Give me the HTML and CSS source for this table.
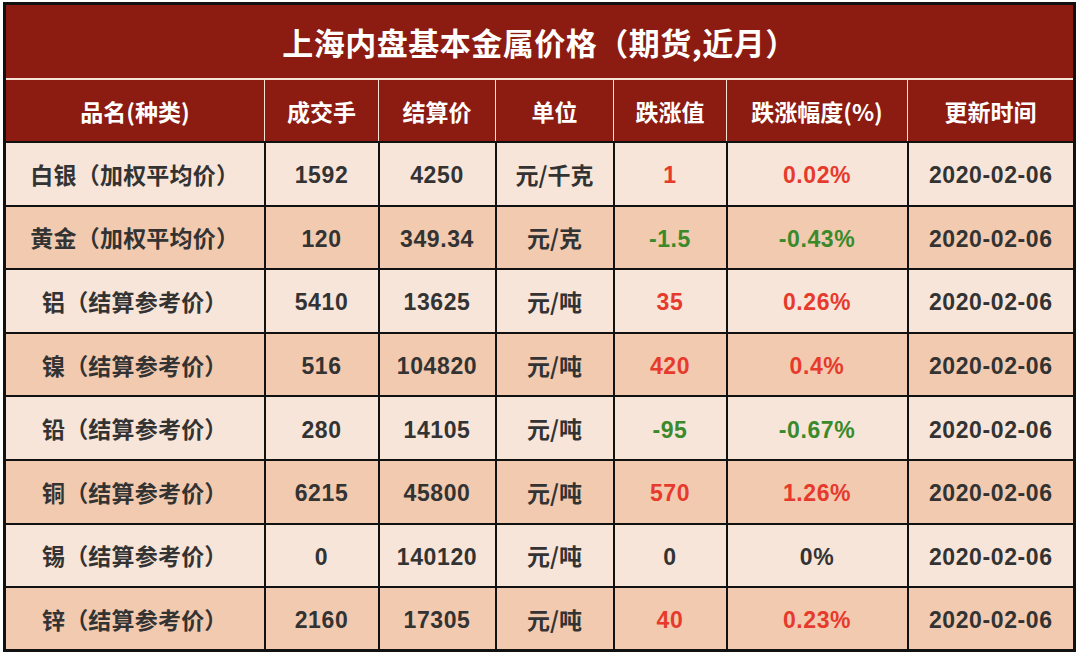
FILE: index.html
```html
<!DOCTYPE html>
<html lang="zh">
<head>
<meta charset="utf-8">
<link rel="stylesheet" href="styles.css">
</head>
<body>
<div class="wrap">
<table class="price">
  <colgroup>
    <col class="c1"><col class="c2"><col class="c3"><col class="c4"><col class="c5"><col class="c6"><col class="c7">
  </colgroup>
  <thead>
    <tr class="title-row"><th colspan="7">上海内盘基本金属价格（期货,近月）</th></tr>
    <tr class="head-row">
      <th>品名(种类)</th><th>成交手</th><th>结算价</th><th>单位</th><th>跌涨值</th><th>跌涨幅度(%)</th><th>更新时间</th>
    </tr>
  </thead>
  <tbody>
    <tr class="light"><td class="name">白银（加权平均价）</td><td class="num">1592</td><td class="num">4250</td><td class="unit">元/千克</td><td class="num up">1</td><td class="num up">0.02%</td><td class="num">2020-02-06</td></tr>
    <tr class="dark"><td class="name">黄金（加权平均价）</td><td class="num">120</td><td class="num">349.34</td><td class="unit">元/克</td><td class="num down">-1.5</td><td class="num down">-0.43%</td><td class="num">2020-02-06</td></tr>
    <tr class="light"><td class="name">铝（结算参考价）</td><td class="num">5410</td><td class="num">13625</td><td class="unit">元/吨</td><td class="num up">35</td><td class="num up">0.26%</td><td class="num">2020-02-06</td></tr>
    <tr class="dark"><td class="name">镍（结算参考价）</td><td class="num">516</td><td class="num">104820</td><td class="unit">元/吨</td><td class="num up">420</td><td class="num up">0.4%</td><td class="num">2020-02-06</td></tr>
    <tr class="light"><td class="name">铅（结算参考价）</td><td class="num">280</td><td class="num">14105</td><td class="unit">元/吨</td><td class="num down">-95</td><td class="num down">-0.67%</td><td class="num">2020-02-06</td></tr>
    <tr class="dark"><td class="name">铜（结算参考价）</td><td class="num">6215</td><td class="num">45800</td><td class="unit">元/吨</td><td class="num up">570</td><td class="num up">1.26%</td><td class="num">2020-02-06</td></tr>
    <tr class="light"><td class="name">锡（结算参考价）</td><td class="num">0</td><td class="num">140120</td><td class="unit">元/吨</td><td class="num">0</td><td class="num">0%</td><td class="num">2020-02-06</td></tr>
    <tr class="dark"><td class="name">锌（结算参考价）</td><td class="num">2160</td><td class="num">17305</td><td class="unit">元/吨</td><td class="num up">40</td><td class="num up">0.23%</td><td class="num">2020-02-06</td></tr>
  </tbody>
</table>
</div>
</body>
</html>
```

FILE: styles.css
```css
html, body {
  margin: 0;
  padding: 0;
  background: #ffffff;
}
.wrap {
  padding: 2px 0 0 3px;
}
.price {
  border-collapse: collapse;
  table-layout: fixed;
  width: 1070px;
  border: 3px solid #111;
  font-family: "Noto Sans CJK SC", sans-serif;
  font-weight: bold;
  color: #333333;
}
.c1 { width: 260px; }
.c2 { width: 114px; }
.c3 { width: 117px; }
.c4 { width: 118px; }
.c5 { width: 113px; }
.c6 { width: 181px; }
.c7 { width: 167px; }

.title-row th {
  height: 73px;
  background: #8c1b12;
  color: #ffffff;
  font-size: 31px;
  font-weight: bold;
  padding: 0;
  border-bottom: 2px solid #f7e2d6;
  letter-spacing: 0.5px;
}
.head-row th {
  height: 61px;
  background: #8c1b12;
  color: #ffffff;
  font-size: 23px;
  font-weight: bold;
  padding: 0;
  border-left: 1px solid #f7e2d6;
  border-right: 1px solid #f7e2d6;
  border-bottom: 2px solid #111;
}
tbody tr {
  height: 63.6px;
}
td {
  padding: 0;
  text-align: center;
  font-size: 23px;
  line-height: 30px;
  border: 2px solid #111;
}
td.name {
  letter-spacing: 0.2px;
}
td.num {
  font-family: "Liberation Sans", sans-serif;
  font-size: 23px;
  letter-spacing: 0.6px;
  padding-top: 3px;
}
tr.light td { background: #f8e5d9; }
tr.dark td { background: #f1cab0; }
td.up { color: #e63a2c; }
td.down { color: #3a8a2c; }
```
